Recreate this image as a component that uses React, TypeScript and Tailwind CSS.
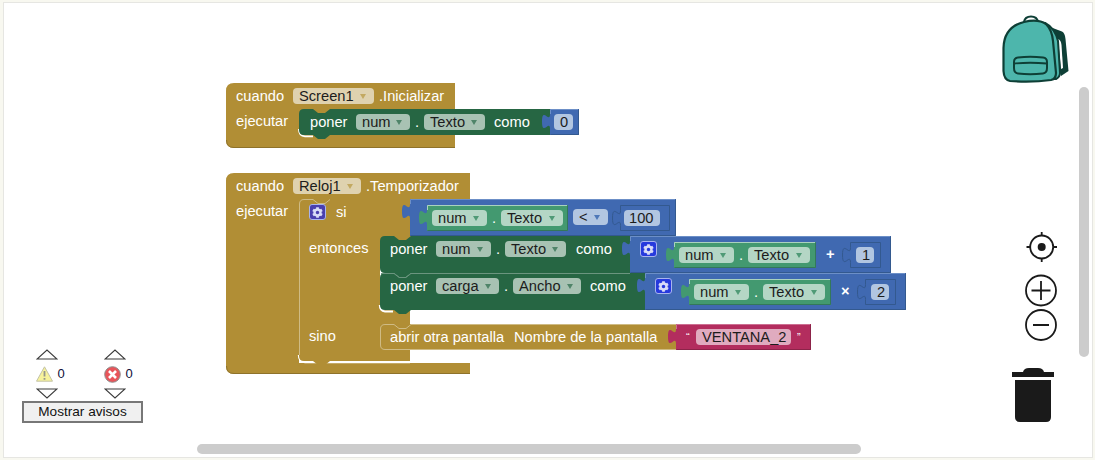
import React from "react";
import { FaCog } from "react-icons/fa";

const MUSTARD = "#b18e35";
const DARK_GREEN = "#266643";
const GETTER_GREEN = "#439970";
const BLUE = "#4069b1";
const PINK = "#b32d5e";

// bloque de valor con la pestaña de puzzle a la izquierda
const valuePath = (x: number, t: number, r: number, b: number) =>
  `M${x},${t} H${r} V${b} H${x} V${t + 20} c0,-10 -8,8 -8,-7.5 s8,2.5 8,-7.5 Z`;

// muesca superior e inferior de los bloques de instrucciones
const stmtPath = (x: number, t: number, r: number, b: number) =>
  `M${x},${t + 5} Q${x},${t} ${x + 5},${t} H${x + 14} L${x + 19},${t + 4} H${x + 26} L${x + 31},${t} H${r} V${b} H${x + 31} L${x + 26},${b + 4} H${x + 19} L${x + 14},${b} H${x + 5} Q${x},${b} ${x},${b - 5} Z`;

function ValueBlock({ x, t, r, b, fill, dark, light }: { x: number; t: number; r: number; b: number; fill: string; dark: string; light: string }) {
  return (
    <g>
      <path d={valuePath(x, t, r, b)} fill={fill} />
      <path d={`M${x + 0.5},${b - 0.5} H${r - 0.5} V${t + 0.5}`} fill="none" stroke={dark} />
      <path d={`M${x + 0.5},${t + 5} V${t + 0.5} H${r - 1}`} fill="none" stroke={light} strokeOpacity="0.7" />
    </g>
  );
}

// hueco vacío donde encaja un número
function Socket({ x, t, r, b }: { x: number; t: number; r: number; b: number }) {
  return <path d={valuePath(x + 0.5, t + 0.5, r - 0.5, b - 0.5)} fill="none" stroke="#33598f" />;
}

function BlockShapes() {
  return (
    <svg className="absolute left-0 top-0" width="1095" height="460" viewBox="0 0 1095 460" aria-hidden="true">
      {/* Screen1.Inicializar */}
      <path d="M226,91 Q226,83 234,83 H455 V148 H234 Q226,148 226,140 Z" fill={MUSTARD} />
      <path d="M226.5,140 Q226.5,147.5 234,147.5 H455" fill="none" stroke="#8e722a" />
      <path d="M298.8,129 Q298.8,136 305,136.4 H313" fill="none" stroke="#ffffff" strokeWidth="1.6" />
      <path d={stmtPath(299, 109, 550, 135)} fill={DARK_GREEN} />
      <ValueBlock x={550} t={109} r={579} b={135} fill={BLUE} dark="#33598f" light="#7f9fd0" />

      {/* Reloj1.Temporizador */}
      <path d="M226,181 Q226,173 234,173 H470 V199 H335 V205 H299 V363 H470 V374 H234 Q226,374 226,366 Z" fill={MUSTARD} />
      <path d="M226.5,366 Q226.5,373.5 234,373.5 H470" fill="none" stroke="#8e722a" />
      <path d="M298.8,355 Q298.8,362 305,362.2 H410" fill="none" stroke="#ffffff" strokeWidth="2" />
      <path d="M299,204 Q299,199 304,199 H313 L318,203 H325 L330,199 H410 V236 H380 V310 H410 V324 H380 V350 H410 V361 H330 L325,365 H318 L313,361 H304 Q299,361 299,356 Z" fill={MUSTARD} />
      <path d="M299.5,355 V204 Q299.5,199.5 304,199.5 H313 L318,203.5 H325 L330,199.5" fill="none" stroke="#cfbb84" />
      {/* relleno detrás de las esquinas y muescas de los hijos */}
      <rect x="375" y="236" width="38" height="6" fill={MUSTARD} />
      <rect x="375" y="324" width="38" height="26" fill={MUSTARD} />

      <path d="M379.8,305 Q379.8,311 385,311.5 H393" fill="none" stroke="#ffffff" strokeWidth="2" />
      <path d={stmtPath(380, 236, 630, 273)} fill={DARK_GREEN} />
      <path d={stmtPath(380, 273, 645, 310)} fill={DARK_GREEN} />
      <path d="M381,273.5 H394 L399,277.5 H406 L411,273.5 H630" fill="none" stroke="#6b957f" />

      <path d="M380,329 Q380,324 385,324 H394 L399,328 H406 L411,324 H676 V350 H385 Q380,350 380,345 Z" fill={MUSTARD} />
      <path d="M380.5,345 V329 Q380.5,324.5 385,324.5 H394 L399,328.5 H406 L411,324.5 H676" fill="none" stroke="#cfbb84" />
      <path d="M380.5,345 Q380.5,349.5 385,349.5 H676" fill="none" stroke="#cfbb84" />

      {/* si: comparación */}
      <ValueBlock x={410} t={199} r={676} b={236} fill={BLUE} dark="#33598f" light="#7f9fd0" />
      <ValueBlock x={427} t={205} r={568} b={231} fill={GETTER_GREEN} dark="#33785a" light="#d5eadf" />
      <Socket x={620} t={205} r={670} b={231} />

      {/* poner num.Texto */}
      <ValueBlock x={630} t={236} r={891} b={273} fill={BLUE} dark="#33598f" light="#7f9fd0" />
      <ValueBlock x={674} t={242} r={816} b={268} fill={GETTER_GREEN} dark="#33785a" light="#d5eadf" />
      <Socket x={850} t={242} r={881} b={268} />

      {/* poner carga.Ancho */}
      <ValueBlock x={645} t={273} r={906} b={310} fill={BLUE} dark="#33598f" light="#7f9fd0" />
      <ValueBlock x={689} t={279} r={831} b={305} fill={GETTER_GREEN} dark="#33785a" light="#d5eadf" />
      <Socket x={865} t={279} r={896} b={305} />

      <ValueBlock x={676} t={324} r={811} b={350} fill={PINK} dark="#8c2349" light="#d88aa7" />
    </svg>
  );
}

function Row({ className, children }: { className: string; children: React.ReactNode }) {
  return <div className={`absolute flex h-4 items-center whitespace-nowrap text-white ${className}`}>{children}</div>;
}

// campo desplegable (o numérico si no lleva flecha)
function Field({ label, className, arrow }: { label: string; className: string; arrow?: string }) {
  return (
    <span className={`flex h-4 shrink-0 items-center justify-between rounded-[4px] pl-[6px] pr-[8px] text-[#1c1c1c] ${className}`}>
      {label}
      {arrow && <span className={`h-0 w-0 border-x-[3.5px] border-t-[5px] border-x-transparent ${arrow}`} />}
    </span>
  );
}

function SetRow({ className, first, firstW, second, secondW, comoGap }: { className: string; first: string; firstW: string; second: string; secondW: string; comoGap: string }) {
  return (
    <Row className={className}>
      <span className="w-[46px]">poner</span>
      <Field label={first} className={`bg-[#a8c2b3] ${firstW}`} arrow="border-t-[#4f8469]" />
      <span className="w-[14px] text-center">.</span>
      <Field label={second} className={`bg-[#a8c2b3] ${secondW}`} arrow="border-t-[#4f8469]" />
      <span className={comoGap}>como</span>
    </Row>
  );
}

function GetRow({ className }: { className: string }) {
  return (
    <Row className={className}>
      <Field label="num" className="w-[55px] bg-[#b4d6c5]" arrow="border-t-[#4f9a76]" />
      <span className="w-[14px] text-center">.</span>
      <Field label="Texto" className="w-[62px] bg-[#b4d6c5]" arrow="border-t-[#4f9a76]" />
    </Row>
  );
}

function GearIcon({ className }: { className: string }) {
  return (
    <span className={`absolute flex h-4 w-[17px] items-center justify-center rounded-[3px] border border-[#a9b4ee] text-[#d9dcf7] ${className}`}>
      <FaCog size={11} />
    </span>
  );
}

function Blocks() {
  return (
    <div className="absolute inset-0 text-[14.67px] [font-family:'Liberation_Sans',Arial,sans-serif]">
      <BlockShapes />

      <Row className="left-[236px] top-[88px]">
        <span className="w-[57px]">cuando</span>
        <Field label="Screen1" className="w-[81px] bg-[#dfd2af]" arrow="border-t-[#c3a961]" />
        <span className="ml-[5px]">.Inicializar</span>
      </Row>
      <Row className="left-[236px] top-[113px]">ejecutar</Row>
      <SetRow className="left-[310px] top-[114px]" first="num" firstW="w-[54px]" second="Texto" secondW="w-[61px]" comoGap="ml-[9px]" />
      <Row className="left-[554px] top-[114px]">
        <Field label="0" className="w-[19px] bg-[#b2c6e1] !pr-0" />
      </Row>

      <Row className="left-[236px] top-[178px]">
        <span className="w-[57px]">cuando</span>
        <Field label="Reloj1" className="w-[68px] bg-[#dfd2af]" arrow="border-t-[#c3a961]" />
        <span className="ml-[5px]">.Temporizador</span>
      </Row>
      <Row className="left-[236px] top-[203px]">ejecutar</Row>
      <GearIcon className="left-[309px] top-[204px] bg-[#4a3fae]" />
      <Row className="left-[336px] top-[204px]">si</Row>
      <GetRow className="left-[432px] top-[210px]" />
      <Row className="left-[573px] top-[209px]">
        <Field label="<" className="w-[35px] bg-[#b2c6e1]" arrow="border-t-[#4f78b8]" />
      </Row>
      <Row className="left-[624px] top-[210px]">
        <Field label="100" className="w-[36px] bg-[#b2c6e1] !px-[5px]" />
      </Row>

      <Row className="left-[309px] top-[240px]">entonces</Row>
      <SetRow className="left-[390px] top-[241px]" first="num" firstW="w-[55px]" second="Texto" secondW="w-[61px]" comoGap="ml-[10px]" />
      <GearIcon className="left-[640px] top-[241px] bg-[#2639dd]" />
      <GetRow className="left-[679px] top-[247px]" />
      <Row className="left-[826px] top-[246px] font-bold">+</Row>
      <Row className="left-[856px] top-[247px]">
        <Field label="1" className="w-[18px] bg-[#b2c6e1] !pr-0" />
      </Row>

      <SetRow className="left-[390px] top-[278px]" first="carga" firstW="w-[63px]" second="Ancho" secondW="w-[68px]" comoGap="ml-[9px]" />
      <GearIcon className="left-[655px] top-[278px] bg-[#2639dd]" />
      <GetRow className="left-[694px] top-[284px]" />
      <Row className="left-[841px] top-[283px] font-bold">×</Row>
      <Row className="left-[871px] top-[284px]">
        <Field label="2" className="w-[18px] bg-[#b2c6e1] !pr-0" />
      </Row>

      <Row className="left-[309px] top-[328px]">sino</Row>
      <Row className="left-[390px] top-[329px]">
        <span className="w-[124px]">abrir otra pantalla</span>
        <span>Nombre de la pantalla</span>
      </Row>
      <Row className="left-[686px] top-[329px]">
        <span className="w-[10px] text-[11px]">“</span>
        <Field label="VENTANA_2" className="w-[95px] bg-[#e0abbf]" />
        <span className="ml-[6px] text-[11px]">”</span>
      </Row>
    </div>
  );
}

function Backpack() {
  return (
    <svg className="absolute left-[1002px] top-[15px]" width="67" height="69" viewBox="0 0 67 69" aria-hidden="true">
      <path d="M22,7 Q23,1.5 29,1.5 Q35,1.5 36,7" fill="none" stroke="#0e3f36" strokeWidth="2.2" />
      <path d="M48,12 L60,16.5 Q63,18 63.5,24 L66.5,56 L59,61 Z" fill="#0e3f36" />
      <path d="M56,24 Q59,25 59.5,30 L61,53 L59,54 Z" fill="#ffffff" />
      <path d="M43,8 Q53,13 56,26 L58,58 Q58,62 54,64 L48,64 Z" fill="#4db6ac" stroke="#0e3f36" strokeWidth="2" strokeLinejoin="round" />
      <path d="M8,66 Q2,65 1.5,56 V33 Q2,12 22,7 Q36,3.5 44,9 Q50,15 51,26 L54,58 Q54,64 49,65 Q30,67.5 8,66 Z" fill="#4db6ac" stroke="#0e3f36" strokeWidth="2.2" strokeLinejoin="round" />
      <path d="M16,42.5 Q28,41 41,42.5 Q45,43 45,47 L45,53 Q45,58 41,58.5 Q28,60 16,58.5 Q12,58 12,53 L12,47 Q12,43 16,42.5 Z" fill="#4db6ac" stroke="#0e3f36" strokeWidth="2" />
      <path d="M12,48.5 Q28,47 45,48.5" fill="none" stroke="#0e3f36" strokeWidth="1.8" />
    </svg>
  );
}

function WorkspaceControls() {
  return (
    <svg className="absolute left-[1005px] top-[225px]" width="70" height="200" viewBox="1005 225 70 200" aria-hidden="true">
      {/* centrar */}
      <circle cx="1041.7" cy="247" r="11.5" fill="#fff" stroke="#1a1a1a" strokeWidth="1.8" />
      <circle cx="1041.7" cy="247" r="4" fill="#1a1a1a" />
      <path d="M1041.7,232 V235.5 M1041.7,258.5 V262 M1026.5,247 H1030 M1053.5,247 H1057" stroke="#1a1a1a" strokeWidth="1.8" />
      {/* zoom */}
      <circle cx="1041" cy="290.5" r="15" fill="#fff" stroke="#1a1a1a" strokeWidth="1.8" />
      <path d="M1031.5,290.5 H1050.5 M1041,281 V300" stroke="#1a1a1a" strokeWidth="1.8" />
      <circle cx="1041" cy="325" r="15" fill="#fff" stroke="#1a1a1a" strokeWidth="1.8" />
      <path d="M1033,325 H1049" stroke="#1a1a1a" strokeWidth="2" />
      {/* papelera */}
      <path d="M1023,372 Q1024,368 1029,368 H1038 Q1043,368 1044,372 H1054 V377 H1012 V372 Z" fill="#1a1a1a" />
      <path d="M1015,380 H1051 V417 Q1051,422 1046,422 H1020 Q1015,422 1015,417 Z" fill="#1a1a1a" />
    </svg>
  );
}

function Arrow({ down }: { down?: boolean }) {
  return (
    <svg width="22" height="11" viewBox="0 0 22 11" aria-hidden="true">
      <path d={down ? "M1,1 H21 L11,10 Z" : "M1,10 H21 L11,1 Z"} fill="#fff" stroke="#3a3a3a" strokeWidth="1.1" />
    </svg>
  );
}

function Counter({ icon }: { icon: React.ReactNode }) {
  return (
    <div className="flex w-[46px] flex-col items-center">
      <Arrow />
      <div className="my-[5px] ml-[7px] flex h-[18px] items-center gap-[4px] text-[13px] text-[#10103a]">
        {icon}
        <span>0</span>
      </div>
      <Arrow down />
    </div>
  );
}

function WarningsPanel() {
  return (
    <div className="absolute left-[22px] top-[349px] flex w-[121px] flex-col items-center [font-family:'Liberation_Sans',Arial,sans-serif]">
      <div className="flex gap-[22px] pr-[3px]">
        <Counter
          icon={
            <svg width="17" height="16" viewBox="0 0 17 16" aria-hidden="true">
              <path d="M8.5,0.8 L16.5,15.2 H0.5 Z" fill="#f7f29a" stroke="#c2c2a8" strokeLinejoin="round" />
              <path d="M8.5,5 V10.5 M8.5,12 V13.8" stroke="#97978a" strokeWidth="1.8" />
            </svg>
          }
        />
        <Counter
          icon={
            <svg width="17" height="17" viewBox="0 0 17 17" aria-hidden="true">
              <circle cx="8.5" cy="8.5" r="7.8" fill="#e8555a" stroke="#8d8d8d" />
              <path d="M5,5 L12,12 M12,5 L5,12" stroke="#fff" strokeWidth="2.6" />
            </svg>
          }
        />
      </div>
      <button className="mt-[2px] h-[22px] w-[121px] border-2 border-[#777777] bg-[#f0f0f0] text-[13.6px] leading-none text-[#111]">
        Mostrar avisos
      </button>
    </div>
  );
}

export default function App() {
  return (
    <div className="relative h-[460px] w-[1095px] overflow-hidden bg-[#f8f8f0] pb-[2px] pl-[3px] pr-[2px] pt-[2px]">
      <div className="h-full w-full border border-[#e6e6e2] bg-white" />
      <Blocks />
      <Backpack />
      <WorkspaceControls />
      <WarningsPanel />
      {/* barras de desplazamiento */}
      <div className="absolute left-[1079px] top-[87px] h-[270px] w-[10px] rounded-[5px] bg-[#cccccc]" />
      <div className="absolute left-[197px] top-[444px] h-[10px] w-[664px] rounded-[5px] bg-[#cccccc]" />
    </div>
  );
}
